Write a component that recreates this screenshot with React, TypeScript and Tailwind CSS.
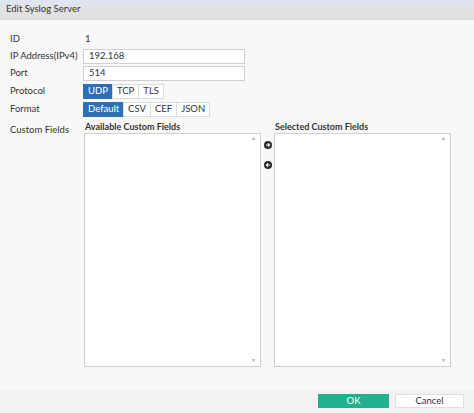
import React from 'react';

function SegButton({ label, active }: { label: string; active?: boolean }) {
  return (
    <div
      className={
        active
          ? 'h-[15px] px-[4px] flex items-center bg-[#2d6fb7] border border-[#2d6fb7] text-white'
          : 'h-[15px] px-[4px] flex items-center bg-white border border-[#dcdcdc] -ml-px text-[#333]'
      }
    >
      {label}
    </div>
  );
}

function ListBox() {
  return (
    <div className="relative w-[177px] h-[234px] bg-white border border-[#cfcfcf]">
      <span className="absolute right-[4px] top-[2px] text-[5px] text-[#aaa] leading-none">▲</span>
      <span className="absolute right-[4px] bottom-[3px] text-[5px] text-[#aaa] leading-none">▼</span>
    </div>
  );
}

function ArrowIcon({ dir }: { dir: 'right' | 'left' }) {
  return (
    <svg width="8" height="8" viewBox="0 0 10 10">
      <circle cx="5" cy="5" r="5" fill="#2b2b2b" />
      {dir === 'right' ? (
        <path d="M2.5 5h4M5 3l2 2-2 2" stroke="#fff" strokeWidth="1.5" fill="none" />
      ) : (
        <path d="M7.5 5h-4M5 3L3 5l2 2" stroke="#fff" strokeWidth="1.5" fill="none" />
      )}
    </svg>
  );
}

export default function App() {
  return (
    <div
      className="w-[474px] h-[413px] flex flex-col bg-[#f8f8f8] text-[9.5px] text-[#333] whitespace-nowrap"
      style={{ fontFamily: 'Lato, "Open Sans", sans-serif' }}
    >
      <div className="h-[20px] flex items-center px-[6px] bg-gradient-to-b from-[#dfe6f2] via-[#e2e2e2] to-[#e0e0e0] border-b border-[#d6d6d6] text-[#333]">
        Edit Syslog Server
      </div>

      <div className="flex-1 pl-[10px] pt-[12px]">
        <div className="grid grid-cols-[73px_1fr] gap-y-[2px] items-center">
          <div className="h-[15px] flex items-center">ID</div>
          <div className="h-[15px] flex items-center pl-[2px]">1</div>

          <div className="h-[15px] flex items-center">IP Address(IPv4)</div>
          <div className="w-[162px] h-[15px] flex items-center px-[5px] bg-white border border-[#cfcfcf]">192.168</div>

          <div className="h-[15px] flex items-center">Port</div>
          <div className="w-[162px] h-[15px] flex items-center px-[5px] bg-white border border-[#cfcfcf]">514</div>

          <div className="h-[15px] flex items-center mt-[1px]">Protocol</div>
          <div className="flex mt-[1px]">
            <SegButton label="UDP" active />
            <SegButton label="TCP" />
            <SegButton label="TLS" />
          </div>

          <div className="h-[15px] flex items-center mt-[1px]">Format</div>
          <div className="flex mt-[1px]">
            <SegButton label="Default" active />
            <SegButton label="CSV" />
            <SegButton label="CEF" />
            <SegButton label="JSON" />
          </div>
        </div>

        <div className="flex mt-[2px]">
          <div className="w-[74px] pt-[4px]">Custom Fields</div>
          <div className="flex flex-col">
            <div className="font-bold text-[9px] h-[14px] flex items-center pl-[1px] pt-[1px]">Available Custom Fields</div>
            <ListBox />
          </div>
          <div className="w-[13px] flex flex-col items-center pt-[22px] gap-[12px]">
            <ArrowIcon dir="right" />
            <ArrowIcon dir="left" />
          </div>
          <div className="flex flex-col">
            <div className="font-bold text-[9px] h-[14px] flex items-center pl-[1px] pt-[1px]">Selected Custom Fields</div>
            <ListBox />
          </div>
        </div>
      </div>

      <div className="h-[23px] bg-[#f2f2f2] flex items-start justify-end pr-[10px] pt-[4px] gap-[6px]">
        <div className="w-[71px] h-[14px] flex items-center justify-center bg-[#22b08e] text-white">OK</div>
        <div className="w-[69px] h-[14px] flex items-center justify-center bg-white border border-[#dedede]">Cancel</div>
      </div>
    </div>
  );
}
